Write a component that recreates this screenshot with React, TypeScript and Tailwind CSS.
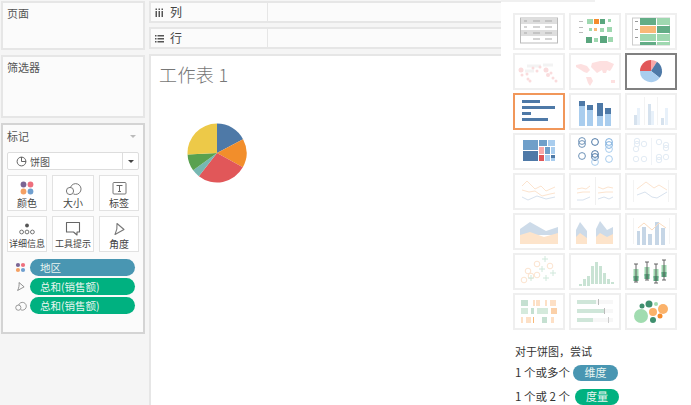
import React from "react";

const font = { fontFamily: '"Noto Sans CJK SC", "Liberation Sans", sans-serif' };

const polar = (cx: number, cy: number, r: number, deg: number) => {
  const a = ((deg - 90) * Math.PI) / 180;
  return [cx + r * Math.cos(a), cy + r * Math.sin(a)];
};

const slice = (cx: number, cy: number, r: number, from: number, to: number) => {
  const [x1, y1] = polar(cx, cy, r, from);
  const [x2, y2] = polar(cx, cy, r, to);
  const large = to - from > 180 ? 1 : 0;
  return `M${cx} ${cy}L${x1} ${y1}A${r} ${r} 0 ${large} 1 ${x2} ${y2}Z`;
};

const pieData = [
  { from: 0, to: 62, color: "#4e79a7" },
  { from: 62, to: 119, color: "#f28e2b" },
  { from: 119, to: 218, color: "#e15759" },
  { from: 218, to: 234, color: "#76b7b2" },
  { from: 234, to: 267, color: "#59a14f" },
  { from: 267, to: 360, color: "#edc948" },
];

// shelf and mark icons
const ColorIcon = ({ size = 18 }: { size?: number }) => (
  <svg width={size} height={size} viewBox="0 0 18 18">
    <circle cx="5.5" cy="5.5" r="2.9" fill="#7b6694" />
    <circle cx="12.5" cy="5.5" r="2.9" fill="#ee6f7d" />
    <circle cx="5.5" cy="12.5" r="2.9" fill="#f4a063" />
    <circle cx="12.5" cy="12.5" r="2.9" fill="#6f9fcf" />
  </svg>
);

const SizeIcon = ({ size = 18 }: { size?: number }) => (
  <svg width={size} height={size} viewBox="0 0 18 18" fill="none" stroke="#777" strokeWidth="1">
    <circle cx="6" cy="12" r="3.6" />
    <path d="M6.5 8.4a5.4 5.4 0 1 1 3 6.6" />
  </svg>
);

const AngleIcon = ({ size = 18 }: { size?: number }) => (
  <svg width={size} height={size} viewBox="0 0 18 18" fill="none" stroke="#777" strokeWidth="1.1">
    <path d="M7 3.5 14 9.5 5 14.5C6.8 11 7.4 7 7 3.5z" strokeLinejoin="round" />
  </svg>
);

const LabelIcon = () => (
  <svg width="15" height="15" viewBox="0 0 15 15" fill="none">
    <rect x="1" y="1.5" width="13" height="11.5" rx="1" stroke="#777" strokeWidth="1" />
    <path d="M4.5 4.5h6M7.5 4.5v6M6 10.5h3" stroke="#666" strokeWidth="1" />
  </svg>
);

const DetailIcon = () => (
  <svg width="16" height="14" viewBox="0 0 16 14" fill="none" stroke="#666" strokeWidth="0.9">
    <circle cx="8" cy="3.5" r="1.9" fill="#555" stroke="none" />
    <circle cx="2.6" cy="10" r="1.9" />
    <circle cx="8" cy="10" r="1.9" />
    <circle cx="13.4" cy="10" r="1.9" />
  </svg>
);

const TooltipIcon = () => (
  <svg width="16" height="16" viewBox="0 0 16 16" fill="none" stroke="#666" strokeWidth="1.1">
    <path d="M1.5 1.5h13v9.5h-2.5v3l-3.5-3h-7z" strokeLinejoin="round" />
  </svg>
);

const PieGlyph = () => (
  <svg width="11" height="11" viewBox="0 0 12 12" fill="none" stroke="#555" strokeWidth="1">
    <circle cx="6" cy="6" r="4.8" />
    <path d="M6 1.2V6H10.8" />
  </svg>
);

// chart type thumbnails, 52x37 viewBox
const G = { d: "#5aa67e", m: "#9fd8b0", l: "#d5eadc" };

const tile = (x: number, y: number, w: number, h: number, c: string, o = 1) => (
  <rect key={`${x}-${y}-${w}`} x={x} y={y} width={w} height={h} fill={c} opacity={o} />
);

const line = (d: string, c: string, w = 1) => <path key={d} d={d} fill="none" stroke={c} strokeWidth={w} />;

const ring = (x: number, y: number, r: number, c: string, w = 1) => (
  <circle key={`${x}-${y}-${r}`} cx={x} cy={y} r={r} fill="none" stroke={c} strokeWidth={w} />
);

const thumbs: { content: React.ReactNode; cls?: string }[] = [
  {
    content: (
      <>
        <rect x="7.5" y="5" width="37" height="25" fill="#fff" stroke="#bbb" />
        {tile(8, 5, 36, 6, "#dedede")}
        {tile(8, 17, 36, 6, "#dedede")}
        {[7.5, 13.5, 19.5].map((y) => tile(11, y, 3, 1, "#aaa"))}
        {[7.5, 13.5, 19.5, 25.5].map((y) => tile(20, y, 7, 1, "#aaa"))}
        {[7.5, 13.5, 19.5, 25.5].map((y) => tile(32, y, 7, 1, "#aaa"))}
      </>
    ),
  },
  {
    content: (
      <>
        {[7, 13, 18].map((y) => tile(10, y + 1, 4, 1, "#bbb"))}
        {tile(18, 6, 6, 5, G.m)}
        {tile(25, 6, 5, 5, "#f58b2c")}
        {tile(31, 6, 5, 5, G.d)}
        {tile(39, 6, 3, 3, G.m)}
        {tile(20, 15, 3, 3, G.m)}
        {tile(25, 15, 3, 3, "#f9b978")}
        {tile(31, 15, 4, 4, G.m)}
        {tile(38, 14, 5, 5, G.m)}
        {tile(17, 24, 6, 6, G.d)}
        {tile(25, 25, 4, 4, G.m)}
        {tile(31, 23, 7, 7, G.d)}
        {tile(39, 24, 5, 5, G.m)}
      </>
    ),
  },
  {
    content: (
      <>
        <rect x="7.5" y="5" width="37" height="27" fill="none" stroke="#ccc" />
        {tile(15, 5, 16, 7, "#63ad86")}
        {tile(32, 5, 13, 7, G.m)}
        {tile(15, 13, 16, 7, "#f9b978")}
        {tile(32, 13, 13, 7, "#63ad86")}
        {tile(15, 21, 16, 7, G.m)}
        {tile(32, 21, 13, 7, G.m)}
        {tile(15, 29, 16, 3, "#63ad86")}
        {tile(32, 29, 13, 3, G.m)}
        {[8, 16, 24].map((y) => tile(10, y, 3, 1, "#999"))}
      </>
    ),
  },
  {
    content: (
      <>
        {line("M14 13h14M30 12h10M12 18h9", "#f3f3f3", 3)}
        {[[8,17,2.5],[14,21,1.5],[9,22,1.5],[15,26,1.5],[17,28,1.5],[20,15,1.5],[27,14,1.5],[33,17,2.5],[35,22,2],[38,20,1.5],[40,25,1.5],[43,28,1.5],[24,18,1.5]].map(([x, y, r]) => (
          <circle key={`${x}-${y}`} cx={x} cy={y} r={r} fill="#fadcdd" />
        ))}
      </>
    ),
  },
  {
    content: (
      <>
        <path d="M7 12l5-1 6 2 3 4-3 3-3-1-3-2-5-3zM17 24l5 0 2 4-3 5-2-3zM23 10l8-2 7 0 7 3-2 4-2 3-3-1-1 3-3 0-1-3-5 3-3-3-3-3z" fill="#fde0e0" />
        <path d="M42 27l4 0 0 3-4 0z" fill="#fde0e0" />
      </>
    ),
  },
  {
    cls: "border-[#808080]",
    content: (
      <>
        <path d={slice(26, 18, 11, 0, 33)} fill="#f8a8a8" />
        <path d={slice(26, 18, 11, 33, 128)} fill="#4e79a7" />
        <path d={slice(26, 18, 11, 128, 270)} fill="#a9cdee" />
        <path d={slice(26, 18, 11, 270, 360)} fill="#e15759" />
      </>
    ),
  },
  {
    cls: "border-[#f1975a]",
    content: (
      <>
        {tile(9, 7, 18, 3, "#4e79a7")}
        {tile(9, 13, 33, 3, "#4e79a7")}
        {tile(9, 19, 9, 3, "#4e79a7")}
        {tile(9, 25, 26, 3, "#4e79a7")}
      </>
    ),
  },
  {
    content: (
      <>
        {tile(10, 8, 6, 5, "#4e79a7")}
        {tile(10, 13, 6, 20, "#a9cdee")}
        {tile(18, 12, 6, 5, "#4e79a7")}
        {tile(18, 17, 6, 16, "#a9cdee")}
        {tile(28, 10, 6, 13, "#4e79a7")}
        {tile(28, 23, 6, 10, "#a9cdee")}
        {tile(36, 15, 6, 6, "#4e79a7")}
        {tile(36, 21, 6, 12, "#a9cdee")}
      </>
    ),
  },
  {
    content: (
      <>
        {tile(9, 22, 3, 10, "#d6e2ee")}
        {tile(12, 15, 3, 17, "#e8f1fa")}
        {tile(23, 11, 3, 21, "#d6e2ee")}
        {tile(26, 18, 3, 14, "#e8f1fa")}
        {tile(36, 25, 3, 7, "#d6e2ee")}
        {tile(40, 15, 3, 17, "#e8f1fa")}
        {tile(19, 4, 1, 28, "#f3f3f3")}
        {tile(32, 4, 1, 28, "#f3f3f3")}
      </>
    ),
  },
  {
    content: (
      <>
        {tile(10, 7, 15, 10, "#6f9fc9")}
        {tile(10, 18, 15, 10, "#4e79a7")}
        {tile(26, 7, 8, 6, "#6f9fc9")}
        {tile(35, 7, 7, 6, "#a9cdee")}
        {tile(26, 14, 5, 7, "#f8a8a8")}
        {tile(26, 22, 5, 6, "#e15759")}
        {tile(32, 14, 5, 7, "#6f9fc9")}
        {tile(38, 14, 4, 7, "#a9cdee")}
        {tile(32, 22, 5, 6, "#a9cdee")}
        {tile(38, 22, 4, 3, "#4e79a7")}
        {tile(38, 25, 4, 3, "#a9cdee")}
      </>
    ),
  },
  {
    content: (
      <>
        {[[13,8,"#6f93b8"],[13,11,"#6f93b8"],[26,9,"#4e79a7"],[40,9,"#7fb0de"],[40,12,"#7fb0de"],[13,23,"#6f93b8"],[26,21,"#4e79a7"],[26,24,"#4e79a7"],[40,16,"#a9cdee"],[40,26,"#a9cdee"],[26,29,"#a9cdee"]].map(([x, y, c]) =>
          ring(x as number, y as number, 3.4, c as string),
        )}
      </>
    ),
  },
  {
    content: (
      <>
        {[[12,8],[12,11],[19,11],[11,16],[11,26],[19,26],[34,9],[41,12],[41,15],[34,24],[34,27],[41,24]].map(([x, y]) => ring(x, y, 2.7, "#e3ecf5"))}
        {tile(26, 5, 1, 27, "#f0f3f7")}
      </>
    ),
  },
  {
    content: (
      <>
        {line("M9 13l5-5 8 8 6-3 5 5 9-4", "#fce4cf")}
        {line("M9 17l7 2 6-1 7 5 8-2 5-1", "#fce4cf")}
        {line("M9 24l6 3 9-4 9 3 9-2", "#d8e2ee")}
      </>
    ),
  },
  {
    content: (
      <>
        {line("M8 16l5-1 4 1 4-3", "#fce4cf")}
        {line("M8 20l6-1 7 0", "#fce4cf")}
        {line("M8 27l6 0 7-3", "#d8e2ee")}
        {line("M29 14l5 2 5-2 5 1", "#fce4cf")}
        {line("M29 20l8-1 7 0", "#fce4cf")}
        {line("M29 26l6-2 5 2 4-2", "#d8e2ee")}
        {tile(26, 4, 1, 28, "#f0f0f0")}
      </>
    ),
  },
  {
    content: (
      <>
        {line("M12 16l9-7 8 6 5-3 8 5", "#fce4cf")}
        {line("M12 22l8-3 7 5 5 1 10-6", "#d8e2ee")}
        {tile(8, 7, 1, 22, "#f3f3f3")}
        {tile(43, 7, 1, 22, "#f3f3f3")}
      </>
    ),
  },
  {
    content: (
      <>
        <path d="M7 16l10-7 16 9 12-4v8H7z" fill="#cddbe9" />
        <path d="M7 22l10-3 14 5 14-4v11H7z" fill="#fde4cb" />
      </>
    ),
  },
  {
    content: (
      <>
        <path d="M7 17l4-8 7 9v13H7zM27 16l4-8 7 9 6-3v17H27z" fill="#cddbe9" />
        <path d="M7 24l4-4 7 5v6H7zM27 24l4-4 7 4 6-3v10H27z" fill="#fde4cb" />
      </>
    ),
  },
  {
    content: (
      <>
        {tile(12, 18, 3, 14, "#c6d6e6")}
        {tile(17, 14, 4, 18, "#c6d6e6")}
        {tile(23, 21, 4, 11, "#c6d6e6")}
        {tile(30, 9, 4, 23, "#c6d6e6")}
        {tile(36, 15, 4, 17, "#c6d6e6")}
        {line("M13 15l6-5 8 7 7-7 7 5", "#fbdcc0")}
        {tile(8, 5, 1, 26, "#f3f3f3")}
        {tile(44, 5, 1, 26, "#f3f3f3")}
      </>
    ),
  },
  {
    content: (
      <>
        {[[11,27],[15,18],[24,11],[37,13],[24,22],[18,23]].map(([x, y]) => ring(x, y, 2.8, "#fce4cf"))}
        {[[18,25],[29,16],[32,6],[33,25],[40,20]].map(([x, y]) => (
          <path key={`${x}-${y}`} d={`M${x - 3} ${y}h6M${x} ${y - 3}v6`} stroke="#d0e8db" strokeWidth="1" />
        ))}
      </>
    ),
  },
  {
    content: (
      <>
        {[[10,31,2],[14,26,7],[18,23,10],[22,13,18],[26,9,22],[30,13,18],[34,20,11],[38,26,5],[42,29,2]].map(([x, y, h]) =>
          tile(x, y, 3, h, "#c9e3d4"),
        )}
      </>
    ),
  },
  {
    content: (
      <>
        {[[11,11,20,16],[22,9,22,15],[31,11,23,17],[39,7,24,17]].map(([x, y1, y2, h], i) => (
          <g key={i}>
            {tile(x - 2.5, y1 + 5, 5, 9, G.m)}
            {tile(x - 2.5, y1 + 12, 5, 5, G.d)}
            <path d={`M${x} ${y1}V${y1 + h + 2 + (i % 2)}M${x - 2} ${y1}h4M${x - 2} ${y1 + h + 2 + (i % 2)}h4`} stroke="#555" fill="none" strokeWidth="0.9" />
          </g>
        ))}
      </>
    ),
  },
  {
    content: (
      <>
        {[[8,7,7,6,"#c5e0d1"],[20,7,2,6,"#fde0c6"],[23,7,4,6,"#fde0c6"],[32,7,2,6,"#fde0c6"],[37,7,6,6,"#fde0c6"],[8,15,7,6,"#d5eadc"],[18,15,3,6,"#c5e0d1"],[24,15,11,6,"#d5eadc"],[38,15,6,6,"#fbd0a8"],[8,24,2,6,"#fde0c6"],[13,24,5,6,"#fde0c6"],[20,24,1,6,"#f9b978"],[29,24,5,6,"#c5e0d1"],[38,24,3,6,"#fde0c6"]].map(([x, y, w, h, c], i) => (
          <rect key={i} x={x as number} y={y as number} width={w as number} height={h as number} fill={c as string} />
        ))}
      </>
    ),
  },
  {
    content: (
      <>
        {[7, 16, 25].map((y) => tile(8, y, 36, 4, "#f7f7f7"))}
        {tile(8, 7, 19, 4, "#cfe6d9")}
        {tile(8, 16, 28, 4, "#cfe6d9")}
        {tile(8, 25, 16, 4, "#cfe6d9")}
        {tile(29, 6, 1, 6, "#bbb")}
        {tile(35, 15, 1, 6, "#bbb")}
        {tile(39, 24, 1, 6, "#ccc")}
      </>
    ),
  },
  {
    content: (
      <>
        <circle cx="16" cy="23" r="7" fill="#a1dcb0" />
        <circle cx="17" cy="13" r="2.5" fill="#3f8f6e" />
        <circle cx="24" cy="11" r="3.5" fill="#3f8f6e" />
        <circle cx="31" cy="11" r="2" fill="#a1dcb0" />
        <circle cx="28" cy="19" r="4" fill="#fbb26a" />
        <circle cx="38" cy="16" r="5" fill="#fbb26a" />
        <circle cx="35" cy="23" r="2.5" fill="#f58b2c" />
        <circle cx="28" cy="27" r="3" fill="#3f8f6e" />
      </>
    ),
  },
];

const markButtons = [
  { label: "颜色", icon: <ColorIcon /> },
  { label: "大小", icon: <SizeIcon /> },
  { label: "标签", icon: <LabelIcon /> },
  { label: "详细信息", icon: <DetailIcon /> },
  { label: "工具提示", icon: <TooltipIcon /> },
  { label: "角度", icon: <AngleIcon /> },
];

const pills = [
  { label: "地区", color: "bg-[#4996b2]", icon: <ColorIcon size={13} /> },
  { label: "总和(销售额)", color: "bg-[#00b180]", icon: <AngleIcon size={13} /> },
  { label: "总和(销售额)", color: "bg-[#00b180]", icon: <SizeIcon size={13} /> },
];

const Card = ({ title, className }: { title: string; className: string }) => (
  <div className={`bg-[#fbfbfb] border-2 border-[#e6e6e6] pl-[4px] text-[11px] leading-[20px] text-[#555] ${className}`}>
    {title}
  </div>
);

const Shelf = ({ icon, title }: { icon: React.ReactNode; title: string }) => (
  <div className="flex h-[22px] bg-[#fbfbfb] border-2 border-[#e6e6e6] border-r-0">
    <div className="flex w-[117px] items-center gap-[6px] border-r border-[#e6e6e6] pl-[4px] text-[12px] text-[#444]">
      {icon}
      <span>{title}</span>
    </div>
  </div>
);

export default function App() {
  return (
    <div className="flex h-[405px] w-[691px] overflow-hidden bg-[#f5f5f5]" style={font}>
      {/* left panels */}
      <div className="flex w-[149px] shrink-0 flex-col gap-[5px] pl-[1px] pt-[1px]">
        <Card title="页面" className="h-[49px] w-[144px]" />
        <Card title="筛选器" className="h-[63px] w-[144px]" />
        <div className="h-[211px] w-[144px] border-2 border-[#d4d4d4] bg-[#fbfbfb] px-[4px]">
          <div className="flex h-[22px] items-center justify-between pr-[3px] text-[11px] text-[#555]">
            <span>标记</span>
            <span className="h-0 w-0 border-x-[3px] border-t-[3px] border-x-transparent border-t-[#bbb]" />
          </div>
          <div className="mt-[5px] flex h-[18px] w-[132px] items-center rounded-[2px] border border-[#ddd] bg-white text-[10px] text-[#555]">
            <div className="flex flex-1 items-center gap-[3px] pl-[8px]">
              <PieGlyph />
              <span>饼图</span>
            </div>
            <div className="flex h-full w-[16px] items-center justify-center border-l border-[#ddd]">
              <span className="h-0 w-0 border-x-[3px] border-t-[3px] border-x-transparent border-t-[#444]" />
            </div>
          </div>
          <div className="mt-[5px] grid w-[132px] grid-cols-[40px_42px_40px] gap-[5px]">
            {markButtons.map((b) => (
              <div key={b.label} className="flex h-[36px] flex-col items-center justify-between border border-[#e2e2e2] bg-white pt-[4px] text-[10px] leading-[14px] whitespace-nowrap text-[#444]">
                <div className="flex h-[16px] items-center">{b.icon}</div>
                <span className={b.label.length > 2 ? "text-[9px]" : ""}>{b.label}</span>
              </div>
            ))}
          </div>
          <div className="mt-[7px] flex flex-col gap-[2px]">
            {pills.map((p, i) => (
              <div key={i} className="flex items-center">
                <div className="flex w-[23px] justify-end pr-[3px]">{p.icon}</div>
                <div className={`flex h-[17px] w-[105px] items-center rounded-full pl-[10px] text-[10.5px] text-[#e8f5f0] ${p.color}`}>
                  {p.label}
                </div>
              </div>
            ))}
          </div>
        </div>
      </div>

      {/* shelves and sheet */}
      <div className="flex w-[352px] shrink-0 flex-col pt-[1px]">
        <div className="flex flex-col gap-[4px]">
          <Shelf
            title="列"
            icon={
              <svg width="9" height="9" viewBox="0 0 9 9" fill="#555">
                <rect x="0.5" y="0.5" width="1.5" height="1.5" />
                <rect x="0.5" y="3" width="1.5" height="6" />
                <rect x="3.5" y="0.5" width="1.5" height="1.5" />
                <rect x="3.5" y="3" width="1.5" height="6" />
                <rect x="6.5" y="0.5" width="1.5" height="1.5" />
                <rect x="6.5" y="3" width="1.5" height="6" />
              </svg>
            }
          />
          <Shelf
            title="行"
            icon={
              <svg width="9" height="9" viewBox="0 0 9 9" fill="#555">
                <rect x="0" y="1" width="1.5" height="1.5" />
                <rect x="2.5" y="1" width="6.5" height="1.5" />
                <rect x="0" y="4" width="1.5" height="1.5" />
                <rect x="2.5" y="4" width="6.5" height="1.5" />
                <rect x="0" y="7" width="1.5" height="1.5" />
                <rect x="2.5" y="7" width="6.5" height="1.5" />
              </svg>
            }
          />
        </div>
        <div className="mt-[5px] flex-1 border-2 border-r-0 border-b-0 border-[#e6e6e6] bg-white pl-[8px]">
          <div className="mt-[5px] text-[18px] leading-[26px] font-light tracking-[0.4px] text-[#777]">工作表 1</div>
          <svg className="mt-[35px] ml-[27px]" width="62" height="62" viewBox="0 0 62 62">
            {pieData.map((s) => (
              <path key={s.from} d={slice(31, 31, 29.5, s.from, s.to)} fill={s.color} />
            ))}
          </svg>
        </div>
      </div>

      {/* show me panel */}
      <div className="flex-1 bg-white">
        <div className="h-[2px] w-[94px] bg-[#f0f0f0]" />
        <div className="grid w-[176px] grid-cols-[repeat(3,52px)] gap-x-[4px] gap-y-[3px] pt-[11px] pl-[12px]">
          {thumbs.map((t, i) => (
            <div key={i} className={`h-[37px] w-[52px] overflow-hidden border-2 bg-white ${t.cls ?? "border-[#efefef]"}`}>
              <svg className="-m-[2px] block" width="52" height="37" viewBox="0 0 52 37">
                {t.content}
              </svg>
            </div>
          ))}
        </div>
        <div className="mt-[13px] pl-[14px] text-[11.5px] text-[#333]">
          <div className="text-[11px] leading-[17px]">对于饼图，尝试</div>
          <div className="mt-[4px] flex h-[17px] items-center">
            <span className="w-[58px]">1 个或多个</span>
            <span className="flex h-[16px] w-[45px] items-center justify-center rounded-full bg-[#4996b2] text-[11px] text-[#e8f5f0]">维度</span>
          </div>
          <div className="mt-[7px] flex h-[17px] items-center">
            <span className="w-[60px]">1 个或 2 个</span>
            <span className="flex h-[16px] w-[44px] items-center justify-center rounded-full bg-[#00b180] text-[11px] text-[#e8f5f0]">度量</span>
          </div>
        </div>
      </div>
    </div>
  );
}
